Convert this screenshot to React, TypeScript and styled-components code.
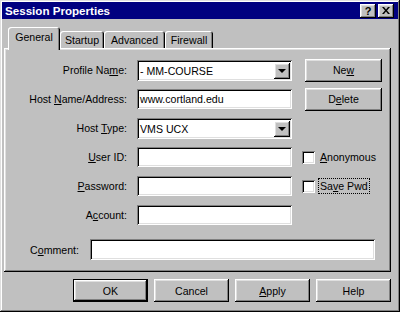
import React from "react";
import styled, { createGlobalStyle, css } from "styled-components";

const GlobalStyle = createGlobalStyle`
  html, body {
    margin: 0;
    padding: 0;
    background: #c0c0c0;
  }
  body {
    font-family: "Liberation Sans", Arial, sans-serif;
    font-size: 10.6px;
    color: #000;
  }
`;

const raised = css`
  box-shadow: inset -1px -1px #000, inset 1px 1px #fff, inset -2px -2px #808080,
    inset 2px 2px #dfdfdf;
`;

const sunken = css`
  box-shadow: inset 1px 1px #808080, inset -1px -1px #fff, inset 2px 2px #000,
    inset -2px -2px #dfdfdf;
`;

const Window = styled.div`
  width: 400px;
  height: 312px;
  box-sizing: border-box;
  padding: 2px;
  background: #c0c0c0;
  box-shadow: inset -1px -1px #000, inset 1px 1px #dfdfdf, inset -2px -2px #808080,
    inset 2px 2px #fff;
  display: flex;
  flex-direction: column;
`;

const TitleBar = styled.div`
  height: 17px;
  background: #000080;
  display: flex;
  align-items: center;
  padding: 0 4px 0 3px;
  gap: 2px;
`;

const Title = styled.div`
  flex: 1;
  color: #fff;
  font-weight: bold;
  font-size: 11.6px;
`;

const CaptionButton = styled.div`
  width: 16px;
  height: 14px;
  background: #c0c0c0;
  ${raised};
  display: flex;
  align-items: center;
  justify-content: center;
  font-weight: bold;
  font-size: 11px;
  line-height: 14px;
`;

const Body = styled.div`
  flex: 1;
  display: flex;
  flex-direction: column;
  padding: 8px 7px 0 2px;
`;

const TabStrip = styled.div`
  height: 21px;
  display: flex;
  align-items: flex-end;
  padding-left: 4px;
`;

const Tab = styled.div<{ $active?: boolean; $w: number }>`
  width: ${(p) => p.$w}px;
  box-sizing: border-box;
  height: ${(p) => (p.$active ? 23 : 17)}px;
  margin-bottom: ${(p) => (p.$active ? -2 : 0)}px;
  padding-bottom: ${(p) => (p.$active ? 4 : 0)}px;
  position: relative;
  z-index: ${(p) => (p.$active ? 1 : 0)};
  background: #c0c0c0;
  border-radius: 3px 3px 0 0;
  box-shadow: inset 1px 1px #fff, inset -1px 0 #000, inset -2px 0 #808080;
  display: flex;
  align-items: center;
  justify-content: center;
`;

const Panel = styled.div`
  height: 224px;
  box-sizing: border-box;
  padding: 12px 0 0 4px;
  ${raised};
`;

const FormGrid = styled.div`
  display: grid;
  grid-template-columns: 119px 155px auto;
  grid-auto-rows: 20px;
  column-gap: 10px;
  row-gap: 9px;
`;

const Label = styled.div<{ $w?: number }>`
  ${(p) => (p.$w ? `width: ${p.$w}px;` : "")}
  display: flex;
  align-items: center;
  justify-content: flex-end;
  white-space: pre;
`;

const Key = styled.span`
  text-decoration: underline;
`;

const Field = styled.div<{ $h?: number; $w?: number }>`
  height: ${(p) => p.$h ?? 20}px;
  ${(p) => (p.$w ? `width: ${p.$w}px;` : "")}
  box-sizing: border-box;
  background: #fff;
  ${sunken};
  display: flex;
  align-items: center;
  padding: 0 2px 0 3px;
  white-space: nowrap;
`;

const FieldText = styled.span`
  flex: 1;
`;

const DropButton = styled.div`
  width: 16px;
  height: 16px;
  background: #c0c0c0;
  ${raised};
  display: flex;
  align-items: center;
  justify-content: center;
`;

const Arrow = styled.div`
  width: 0;
  height: 0;
  border-left: 4px solid transparent;
  border-right: 4px solid transparent;
  border-top: 4px solid #000;
  margin-top: 1px;
`;

const Button = styled.div<{ $w?: number; $default?: boolean }>`
  width: ${(p) => p.$w ?? 75}px;
  height: 23px;
  box-sizing: border-box;
  background: #c0c0c0;
  display: flex;
  align-items: center;
  justify-content: center;
  ${(p) =>
    p.$default
      ? css`
          box-shadow: inset 0 0 0 1px #000, inset -2px -2px #000, inset 2px 2px #fff,
            inset -3px -3px #808080, inset 3px 3px #dfdfdf;
        `
      : raised};
`;

const SideButton = styled(Button)`
  align-self: center;
  margin-left: 3px;
`;

const CheckRow = styled.div`
  display: flex;
  align-items: center;
`;

const CheckBox = styled.div`
  width: 13px;
  height: 13px;
  box-sizing: border-box;
  background: #fff;
  ${sunken};
`;

const CheckLabel = styled.span<{ $focus?: boolean }>`
  margin-left: 4px;
  padding: 1px 1px;
  outline: ${(p) => (p.$focus ? "1px dotted #000" : "none")};
`;

const CommentRow = styled.div`
  display: flex;
  align-items: center;
  margin-top: 14px;
  gap: 11px;
`;

const ButtonRow = styled.div`
  display: flex;
  justify-content: flex-end;
  gap: 6px;
  margin-top: 7px;
`;

const CloseIcon = () => (
  <svg width="8" height="7" viewBox="0 0 8 7">
    <path d="M0 0h2l2 2.5L6 0h2L5 3.5 8 7H6L4 4.5 2 7H0l3-3.5z" fill="#000" />
  </svg>
);

const Select = ({ value }: { value: string }) => (
  <Field $h={21}>
    <FieldText>{value}</FieldText>
    <DropButton>
      <Arrow />
    </DropButton>
  </Field>
);

export default function App() {
  return (
    <>
      <GlobalStyle />
      <Window>
        <TitleBar>
          <Title>Session Properties</Title>
          <CaptionButton>?</CaptionButton>
          <CaptionButton>
            <CloseIcon />
          </CaptionButton>
        </TitleBar>
        <Body>
          <TabStrip>
            <Tab $active $w={52}>General</Tab>
            <Tab $w={44}>Startup</Tab>
            <Tab $w={61}>Advanced</Tab>
            <Tab $w={48}>Firewall</Tab>
          </TabStrip>
          <Panel>
            <FormGrid>
              <Label>
                <span>
                  Profile Na<Key>m</Key>e:
                </span>
              </Label>
              <Select value="- MM-COURSE" />
              <SideButton $w={77}>
                <span>
                  Ne<Key>w</Key>
                </span>
              </SideButton>

              <Label>
                <span>
                  Host <Key>N</Key>ame/Address:
                </span>
              </Label>
              <Field>
                <FieldText>www.cortland.edu</FieldText>
              </Field>
              <SideButton $w={77}>
                <span>
                  D<Key>e</Key>lete
                </span>
              </SideButton>

              <Label>
                <span>
                  Host <Key>T</Key>ype:
                </span>
              </Label>
              <Select value="VMS UCX" />
              <div />

              <Label>
                <span>
                  <Key>U</Key>ser ID:
                </span>
              </Label>
              <Field />
              <CheckRow>
                <CheckBox />
                <CheckLabel>
                  <Key>A</Key>nonymous
                </CheckLabel>
              </CheckRow>

              <Label>
                <span>
                  <Key>P</Key>assword:
                </span>
              </Label>
              <Field />
              <CheckRow>
                <CheckBox />
                <CheckLabel $focus>
                  Sa<Key>v</Key>e Pwd
                </CheckLabel>
              </CheckRow>

              <Label>
                <span>
                  A<Key>c</Key>count:
                </span>
              </Label>
              <Field />
              <div />
            </FormGrid>
            <CommentRow>
              <Label $w={71}>
                <span>
                  C<Key>o</Key>mment:
                </span>
              </Label>
              <Field $h={21} $w={285} />
            </CommentRow>
          </Panel>
          <ButtonRow>
            <Button $default>OK</Button>
            <Button>Cancel</Button>
            <Button>
              <span>
                <Key>A</Key>pply
              </span>
            </Button>
            <Button>Help</Button>
          </ButtonRow>
        </Body>
      </Window>
    </>
  );
}
